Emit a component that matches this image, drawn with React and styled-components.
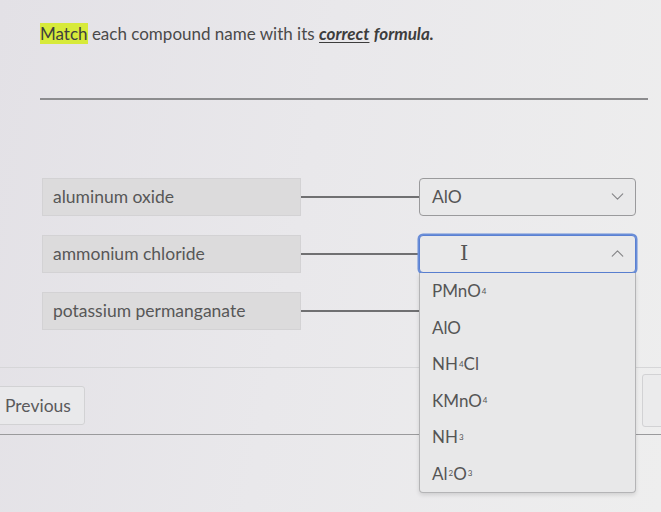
import React from 'react';
import styled, { createGlobalStyle } from 'styled-components';
import { ChevronDown, ChevronUp } from 'lucide-react';

const GlobalStyle = createGlobalStyle`
    html, body {
        margin: 0;
        padding: 0;
    }
    body {
        width: 661px;
        height: 512px;
        overflow: hidden;
        font-family: Lato, 'Open Sans', sans-serif;
        background: linear-gradient(100deg, #e3e1e6 0%, #e9e8eb 45%, #eeeeee 100%);
    }
`;

const Page = styled.div`
    position: relative;
    width: 661px;
    height: 512px;
    overflow: hidden;
    display: flex;
    flex-direction: column;
`;

const Question = styled.div`
    padding: 23px 0 0 40px;
    font-size: 17px;
    color: #4a4a4a;
    line-height: 22px;
`;

const Highlight = styled.span`
    background: #d7ea3a;
    color: #3f3f3f;
`;

const Emph = styled.span`
    font-style: italic;
    font-weight: 700;
    color: #3d3d3d;
    text-decoration: ${(p) => (p.$underline ? 'underline' : 'none')};
    text-underline-offset: 2px;
`;

const Rule = styled.div`
    margin: 53px 13px 0 40px;
    height: 1.5px;
    background: #8c8c8e;
`;

const Rows = styled.div`
    display: flex;
    flex-direction: column;
    gap: 19px;
    margin: 78px 0 0 42px;
`;

const Row = styled.div`
    display: grid;
    grid-template-columns: 259px 118px 217px;
    align-items: center;
    height: 38px;
`;

const NameBox = styled.div`
    height: 38px;
    display: flex;
    align-items: center;
    padding-left: 10px;
    background: #dcdbdc;
    border: 1px solid #d3d2d4;
    box-sizing: border-box;
    font-size: 17.5px;
    color: #575757;
`;

const Connector = styled.div`
    height: 2px;
    background: #707072;
`;

const SelectWrap = styled.div`
    position: relative;
    height: 38px;
`;

const Select = styled.div`
    height: 38px;
    box-sizing: border-box;
    display: flex;
    align-items: center;
    justify-content: space-between;
    padding: 0 7px 0 12px;
    border: 1px solid ${(p) => (p.$focused ? '#5a80d2' : '#9a9a9c')};
    box-shadow: ${(p) => (p.$focused ? '0 0 0 1.5px #6a8ed8' : 'none')};
    border-radius: 4px;
    background: #e9e9ea;
    font-size: 17.5px;
    color: #555;
    svg {
        color: #858587;
    }
`;

const Cursor = styled.span`
    font-family: 'DejaVu Serif', serif;
    font-size: 21px;
    color: #555;
    margin-left: 28px;
    line-height: 1;
`;

const Menu = styled.div`
    position: absolute;
    top: 38px;
    left: 0;
    width: 217px;
    box-sizing: border-box;
    background: #e8e8e9;
    border: 1px solid #b4b4b6;
    border-top: none;
    border-radius: 0 0 4px 4px;
    box-shadow: 0 2px 4px rgba(0, 0, 0, 0.12);
    z-index: 5;
`;

const Option = styled.div`
    height: 36.5px;
    display: flex;
    align-items: center;
    padding-left: 12px;
    font-size: 17px;
    color: #555;

    sub {
        font-size: 8px;
        vertical-align: baseline;
        margin-left: 1px;
    }
`;

const Divider = styled.div`
    margin-top: ${(p) => p.$top}px;
    height: 1px;
    background: ${(p) => p.$color};
`;

const Footer = styled.div`
    display: flex;
    justify-content: space-between;
    align-items: flex-start;
    margin-top: 18px;
`;

const NavButton = styled.div`
    height: 39px;
    box-sizing: border-box;
    display: flex;
    align-items: center;
    border: 1px solid #d2d2d4;
    border-radius: 3px;
    background: #e9e9eb;
    font-size: 17.5px;
    color: #5a5a5c;
    padding: 0 13px 0 14px;
    margin-left: -10px;
`;

// the next button sits mostly behind the open menu; only its left edge shows
const HiddenButton = styled.div`
    width: 60px;
    height: 53px;
    box-sizing: border-box;
    border: 1px solid #d2d2d4;
    border-radius: 3px;
    background: #ebebec;
    margin: -12px -41px 0 0;
`;

const names = ['aluminum oxide', 'ammonium chloride', 'potassium permanganate'];

const options = [
    <>PMnO<sub>4</sub></>,
    <>AlO</>,
    <>NH<sub>4</sub>Cl</>,
    <>KMnO<sub>4</sub></>,
    <>NH<sub>3</sub></>,
    <>Al<sub>2</sub>O<sub>3</sub></>,
];

const App = () => {
    return (
        <>
            <GlobalStyle />
            <Page>
                <Question>
                    <Highlight>Match</Highlight> each compound name with its{' '}
                    <Emph $underline>correct</Emph> <Emph>formula.</Emph>
                </Question>
                <Rule />
                <Rows>
                    {names.map((name, i) => (
                        <Row key={name}>
                            <NameBox>{name}</NameBox>
                            <Connector />
                            {i === 0 && (
                                <SelectWrap>
                                    <Select>
                                        <span>AlO</span>
                                        <ChevronDown size={21} strokeWidth={1.3} />
                                    </Select>
                                </SelectWrap>
                            )}
                            {i === 1 && (
                                <SelectWrap>
                                    <Select $focused>
                                        <Cursor>I</Cursor>
                                        <ChevronUp size={21} strokeWidth={1.3} />
                                    </Select>
                                    <Menu>
                                        {options.map((o, k) => (
                                            <Option key={k}>{o}</Option>
                                        ))}
                                    </Menu>
                                </SelectWrap>
                            )}
                        </Row>
                    ))}
                </Rows>
                <Divider $top={37} $color="#d6d6d8" />
                <Footer>
                    <NavButton>Previous</NavButton>
                    <HiddenButton />
                </Footer>
                <Divider $top={7} $color="#9a9a9c" />
            </Page>
        </>
    );
};

export default App;
